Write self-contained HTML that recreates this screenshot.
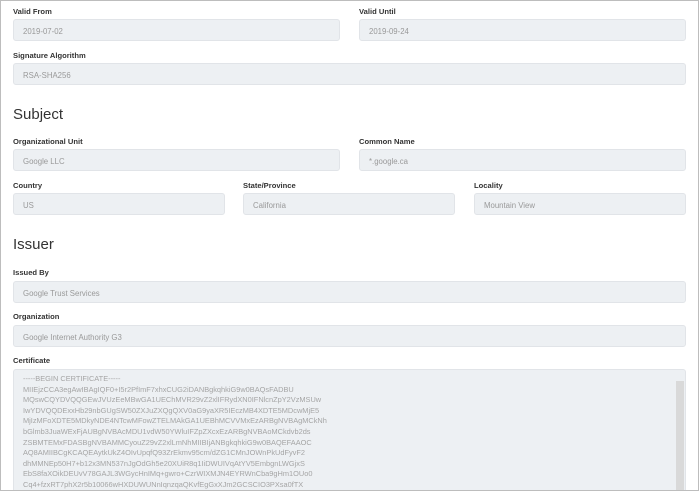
<!DOCTYPE html><html><head><style>
*{box-sizing:border-box;margin:0;padding:0}
html,body{width:700px;height:491px;overflow:hidden}
body{background:#fff;font-family:"Liberation Sans",sans-serif;position:relative}
.frame{position:absolute;left:0;top:0;width:699px;height:491px;border:1px solid #bdbdbd;z-index:5;pointer-events:none}
.l{position:absolute;font-size:7.6px;font-weight:bold;color:#333}
.i{position:absolute;height:22px;background:#edf0f3;border:1px solid #e1e4e8;border-radius:3px;font-size:7.8px;color:#999;padding:7px 9px}
h3{position:absolute;font-weight:normal;font-size:15px;color:#333;left:13px}
.ta{position:absolute;left:13px;top:369px;width:673px;height:130px;background:#edf0f3;border:1px solid #e1e4e8;border-radius:3px;font-size:7.4px;color:#a5a5a5;padding:4px 9px;line-height:10.6px;overflow:hidden;white-space:pre}
.sb{position:absolute;left:676px;top:381px;width:8px;height:120px;background:#d9d9d9}
.wrap{position:absolute;left:0;top:0;width:700px;height:491px;overflow:hidden}
</style></head><body><div class="wrap">
<div class="frame"></div>
<div class="l" style="left:13px;top:7px">Valid From</div>
<div class="l" style="left:359px;top:7px">Valid Until</div>
<div class="i" style="left:13px;top:19px;width:327px">2019-07-02</div>
<div class="i" style="left:359px;top:19px;width:327px">2019-09-24</div>
<div class="l" style="left:13px;top:51px">Signature Algorithm</div>
<div class="i" style="left:13px;top:63px;width:673px">RSA-SHA256</div>
<h3 style="top:106px">Subject</h3>
<div class="l" style="left:13px;top:137px">Organizational Unit</div>
<div class="l" style="left:359px;top:137px">Common Name</div>
<div class="i" style="left:13px;top:149px;width:327px">Google LLC</div>
<div class="i" style="left:359px;top:149px;width:327px">*.google.ca</div>
<div class="l" style="left:13px;top:181px">Country</div>
<div class="l" style="left:243px;top:181px">State/Province</div>
<div class="l" style="left:474px;top:181px">Locality</div>
<div class="i" style="left:13px;top:193px;width:212px">US</div>
<div class="i" style="left:243px;top:193px;width:212px">California</div>
<div class="i" style="left:474px;top:193px;width:212px">Mountain View</div>
<h3 style="top:236px">Issuer</h3>
<div class="l" style="left:13px;top:268px">Issued By</div>
<div class="i" style="left:13px;top:281px;width:673px">Google Trust Services</div>
<div class="l" style="left:13px;top:312px">Organization</div>
<div class="i" style="left:13px;top:325px;width:673px">Google Internet Authority G3</div>
<div class="l" style="left:13px;top:356px">Certificate</div>
<div class="ta">-----BEGIN CERTIFICATE-----
MIIEjzCCA3egAwIBAgIQF0+I5r2PfImF7xhxCUG2iDANBgkqhkiG9w0BAQsFADBU
MQswCQYDVQQGEwJVUzEeMBwGA1UEChMVR29vZ2xlIFRydXN0IFNlcnZpY2VzMSUw
IwYDVQQDExxHb29nbGUgSW50ZXJuZXQgQXV0aG9yaXR5IEczMB4XDTE5MDcwMjE5
MjIzMFoXDTE5MDkyNDE4NTcwMFowZTELMAkGA1UEBhMCVVMxEzARBgNVBAgMCkNh
bGlmb3JuaWExFjAUBgNVBAcMDU1vdW50YWluIFZpZXcxEzARBgNVBAoMCkdvb2ds
ZSBMTEMxFDASBgNVBAMMCyouZ29vZ2xlLmNhMIIBIjANBgkqhkiG9w0BAQEFAAOC
AQ8AMIIBCgKCAQEAytkUkZ4OIvUpqfQ93ZrEkmv95cm/dZG1CMnJOWnPkUdFyvF2
dhMMNEp50H7+b12x3MN537nJgOdGh5e20XUiR8q1IiDWUIVqAtYV5EmbgnLWGjxS
EbS8faXOikDEUvV78GAJL3WGycHnIMq+gwro+CzrWIXMJN4EYRWnCba9gHm1OUo0
Cq4+fzxRT7phX2r5b10066wHXDUWUNnIqnzqaQKvfEgGxXJm2GCSCIO3PXsa0fTX</div>
<div class="sb"></div>
</div></body></html>
